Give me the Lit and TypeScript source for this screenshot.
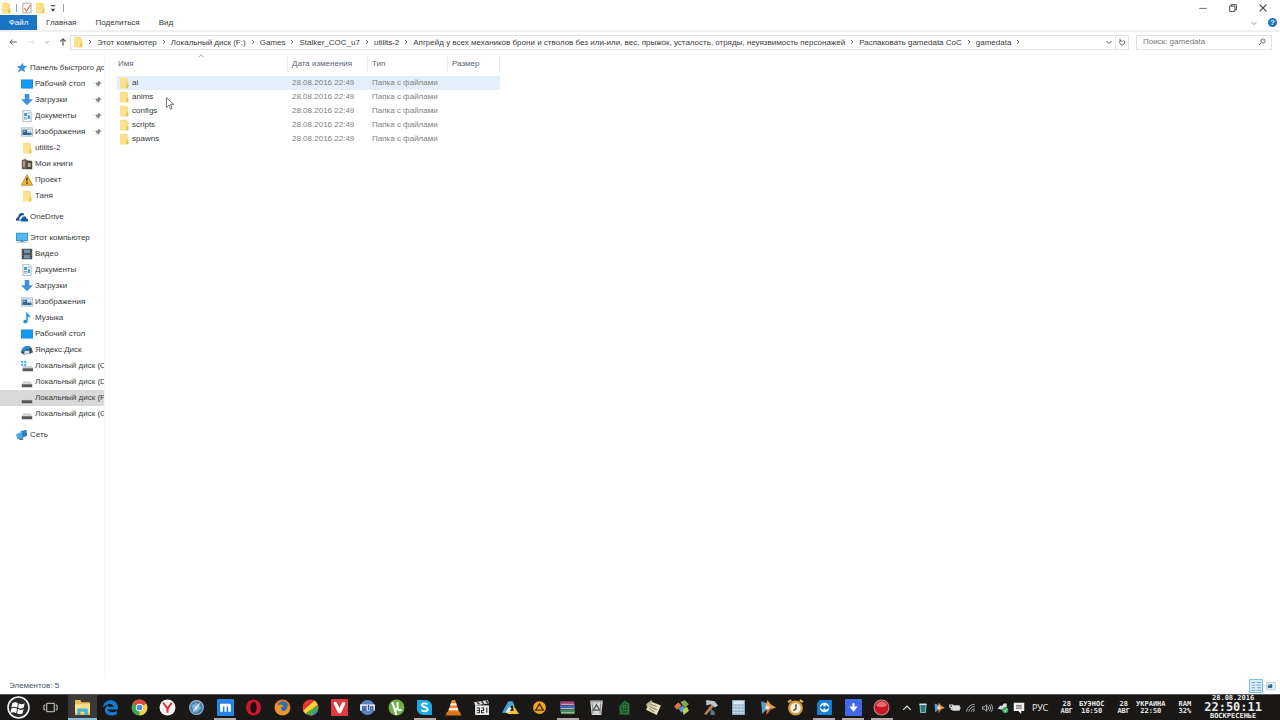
import { LitElement, html, svg, css, nothing, TemplateResult } from "lit";
import { customElement, property } from "lit/decorators.js";
import { classMap } from "lit/directives/class-map.js";

type Art = TemplateResult<2>;

const art: Record<string, Art> = {
  folder: svg`<path d="M3 1h7l1 1h2v13H3z" fill="#f5d675"/><path d="M3 2h8v13H3z" fill="#fce28c"/><path d="M12 9h2v6h-4z" fill="#eac653"/>`,
  check: svg`<path d="M2.500 1.500h11v13h-11z" fill="#f7f7f7" stroke="#9a9a9a"/><path d="M4.500 8l3 4 5-8" fill="none" stroke="#d0734e" stroke-width="1.600"/>`,
  star: svg`<path d="M9 1l1 4 5 0-4 4 1 5-4-3-6 3 3-5-4-3 5-1z" fill="#3a93dc"/>`,
  desktop: svg`<path d="M0 2h16v12H0z" fill="#1482d8"/><path d="M1 3h14v10H1z" fill="#169bf5"/>`,
  down: svg`<path d="M5 0h6v7h5l-8 8-8-8h5z" fill="#3f8fdb"/>`,
  docs: svg`<path d="M2.500.5h9l2 2v13h-11z" fill="#f3f9fc" stroke="#91a9b5"/><path d="M4 4h4v4H4zM9 7h3v5H9z" fill="#4aa0cc"/><path d="M4 10h4M9 4h3M4 12h4" stroke="#6a8b9c"/>`,
  pics: svg`<path d="M.5 2.500h15v11H.5z" fill="#edf5fa" stroke="#8fa3ae"/><path d="M2 4h12v8H2z" fill="#b9dcf3"/><path d="M2 5h6v7H2zM2 9h12v3H2z" fill="#35658d"/><path d="M8 6h5M3 7h3" stroke="#fff"/>`,
  books: svg`<path d="M1 3l5-2 2 3v11H1z" fill="#6c6253"/><path d="M7 3l8 1v11H7z" fill="#4b4740"/><path d="M3 4h2v8H3z" fill="#c9b38b"/><path d="M9 6l4 1v5H9z" fill="#b8a88c"/>`,
  warn: svg`<path d="M8 1l7.500 14H.5z" fill="#f6b734" stroke="#b07616"/><path d="M7 5h2l-.4 5H7.400zM7 11h2v2H7z" fill="#222"/>`,
  onedrive: svg`<path d="M0 12c0-3 2-4 3-4 0-4 4-7 8-4l-1 2C8 5 6 6 6 8c-2 0-2 3-1 5H2c-1 0-2 0-2-1z" fill="#1b4f96"/><path d="M7 14c-2-1-1-4 1-4 0-4 6-4 6 0 3 0 3 4 1 4z" fill="#1c5ba5"/>`,
  pc: svg`<path d="M0 1h16v11H0z" fill="#3588c4"/><path d="M1 2h14v9H1z" fill="#50baf3"/><path d="M6 12h4v1h5v1H1v-1h5z" fill="#7996a8"/>`,
  video: svg`<path d="M1 1h14v14H1z" fill="#3c4247"/><path d="M4 2h8v5H4zM4 9h8v5H4z" fill="#6e92ad"/><path d="M2.500 2v13M13.500 2v13" stroke="#b8bdc0" stroke-dasharray="1 1.500"/>`,
  music: svg`<path d="M8 0c1 4 6 4 4 9 0-3-3-3-3-3v6c0 4-6 4-6 1s3-3 4-2V0z" fill="#2493de"/>`,
  yadisk: svg`<path d="M0 12C1 4 9 0 14 5l2 6-4 2-8 1z" fill="#3b5870"/><path d="M0 10c2-8 10-9 13-5L6 8z" fill="#2c8ed0"/><path d="M5 9h6v4H4z" fill="#dce9f0"/>`,
  sysdrive: svg`<path d="M0 1h3v3H0zM4 1h3v3H4zM0 5h3v3H0zM4 5h3v3H4z" fill="#59bfe9"/><path d="M3 8h11l2 3H2z" fill="#cdd0d2"/><path d="M2 11h14v4H2z" fill="#5a5d60"/>`,
  drive: svg`<path d="M3 7h10l2 4H1z" fill="#d5d5d5"/><path d="M1 11h14v4H1z" fill="#55585a"/>`,
  net: svg`<path d="M6 3l8-2 1 8-7 3z" fill="#2f83bd"/><path d="M0 7l8-3 1 8-7 2z" fill="#53a7db"/><path d="M4 13l5-1 1 2-5 1z" fill="#37698c"/>`,
  start: svg`<circle cx="8" cy="8" r="7.300" fill="#2a2a2a" stroke="#f4f4f4" stroke-width="1.100"/><path d="M3.600 5c1.600-.9 2.800-.8 4 0l-.5 3c-1.500-.8-2.700-.7-4 0zM8.300 5.200c1.500.7 2.700.6 4-.2l-.7 3c-1.300.9-2.500.9-3.900.1zM3 8.800c1.300-.8 2.500-.7 4 .1L6.400 12c-1.400-.9-2.600-.9-4-.1zM7.600 9.100c1.400.8 2.600.7 3.900-.1l-.6 3c-1.400.9-2.600.8-3.900 0z" fill="#fff"/>`,
  taskview: svg`<path d="M4 3.500h8v9H4zM2.500 5.500h-1.500v5h1.500M13.500 5.500h1.500v5h-1.500" fill="none" stroke="#dcdcdc"/>`,
  explorer: svg`<path d="M1 1h5l1 2h8v12H1z" fill="#e8c35c"/><path d="M1 5h14v8H1z" fill="#fbe28e"/><path d="M3 9h10v6h-3v-3H6v3H3z" fill="#4db1cf"/>`,
  edge: svg`<path d="M1 8c.3-9 14-9 14 0v1.800H5.500c.3 3 5 3.300 8.500 1.500v3C7 17.500 1.500 14 3 9c.4-1.600 1.600-2.800 3-3.400-.6.7-.7 1.300-.7 1.700h5.500C10.600 3.500 4.500 3.800 1 8z" fill="#1977cc"/>`,
  chrome: svg`<circle cx="8" cy="8" r="7.500" fill="#44a552"/><path d="M8 8L1.500 4.200A7.500 7.500 0 0 1 14.500 4.400z" fill="#e14a38"/><path d="M8 8l6.500-3.600A7.500 7.500 0 0 1 8 15.500z" fill="#f7d13f"/><circle cx="8" cy="8" r="3.500" fill="#fff"/><circle cx="8" cy="8" r="2.700" fill="#4b8fd5"/>`,
  yandex: svg`<circle cx="8" cy="8" r="7.500" fill="#f6f6f6"/><path d="M4 3.500l4 5.500v4M12 3.500L8 9" fill="none" stroke="#d83434" stroke-width="1.900"/>`,
  safari: svg`<circle cx="8" cy="8" r="7" fill="#a9bac7"/><circle cx="8" cy="8" r="6" fill="#3c7cae"/><path d="M3 6l5-3 2 3 3 2-5 5-3-2z" fill="#6fb1d6"/><path d="M12 3L8.800 9 4 13l3-6z" fill="#e6e4e0"/>`,
  maxthon: svg`<rect width="16" height="16" rx="1" fill="#2584e4"/><path d="M3 12V4.500h8.500c1 0 1.500.5 1.500 1.500v6h-2.500V7H9v5H7V7H5.500v5z" fill="#fff"/>`,
  opera: svg`<ellipse cx="8" cy="8" rx="7" ry="7.500" fill="#d3142d"/><ellipse cx="8" cy="8" rx="3" ry="5.500" fill="#1b1011"/>`,
  firefox: svg`<circle cx="8" cy="8" r="7.500" fill="#e8742a"/><circle cx="8.500" cy="7" r="5" fill="#2d6fab"/><path d="M1 4l3 2c3-2 4 0 5 1-3 0-3 3-1 4 3 1 5-2 5-6 3 5 1 10-5 10C3 15 0 11 1 4z" fill="#f0942e"/>`,
  rainbow: svg`<circle cx="8" cy="8" r="7.500" fill="#e6382e"/><path d="M1 11L12 1.500l3 4L3.500 14z" fill="#f4d83c"/><path d="M3 13.500L15.500 6c.4 5-3 9.500-7.500 9.500z" fill="#49a945"/><path d="M8 15.500l7.500-6c-1 4-4 6-7.500 6z" fill="#368bd2"/>`,
  vivaldi: svg`<rect width="16" height="16" rx="1" fill="#e2393e"/><path d="M2.500 4.500C2 2 5 2 5.800 4L8 8.500 9.800 5c.7-3 4.200-2.500 3.500 0L9.500 13c-.7 1-2.300 1-3 0z" fill="#fff"/>`,
  globe: svg`<circle cx="8" cy="8" r="7" fill="#5a83c0"/><path d="M1 5h14v6H1z" fill="#d9e5f3"/><path d="M3.500 6.500v4h3v-4M5 6.500v4M9 5.500v5M11 7.500h2v3h-2z" fill="none" stroke="#315998" stroke-width="1.200"/>`,
  utorrent: svg`<circle cx="8" cy="8" r="7.500" fill="#6dae45"/><path d="M4 3l2 6c1 2 3 1 3-1V3M9 7c0 4 2 4 4 3M6 9l2 6" fill="none" stroke="#fff" stroke-width="1.900"/>`,
  skype: svg`<path d="M1 1h9c4 1 6 5 5 7v7H7C3 15 0 11 1 7z" fill="#1aa9e8"/><path d="M11 5C9 3.500 5 4 5.500 6c.5 2 5.500 1 5.500 3.700 0 2.300-4 2.300-6 .8" fill="none" stroke="#fff" stroke-width="1.800"/>`,
  vlc: svg`<path d="M6.500 1h3l4 12h-11z" fill="#f08a24"/><path d="M5.500 4h5l.7 2H4.800zM4 8.500h8l.6 2H3.400z" fill="#eee"/><path d="M2 12h12l1.500 3.500H.5z" fill="#dd7417"/>`,
  clapper: svg`<path d="M1 3l13-2 1 3L2 6z" fill="#ddd"/><path d="M4 3l2 2M8 2l2 2.500M12 1.500l2 2" stroke="#222" stroke-width="1.300"/><path d="M2 6h13v9H2z" fill="#efefef"/><path d="M3.500 8.500H6V13H3.500M8 8.500h2v2.300H8V13h2.500M13 8v5M3.500 10.800H6" fill="none" stroke="#292929"/>`,
  aimp: svg`<path d="M0 13L6 2h4l2 5-3-1-5 7z" fill="#42a6dc"/><path d="M10 5l6 9H5l1-3h5z" fill="#f1c62b"/><path d="M7 7l-4 6h3l3-4z" fill="#e7f3f9"/>`,
  orange: svg`<circle cx="8" cy="8" r="6" fill="#f4a41e"/><path d="M8 4.500l3.500 6h-7z" fill="none" stroke="#443018" stroke-width="1.300"/>`,
  rar: svg`<path d="M1 2h13l1 4H1z" fill="#9b4172"/><path d="M1 6h14v4H1z" fill="#4863b1"/><path d="M1 10h14v4H2z" fill="#428b55"/><path d="M2 5h12M2 9h12M2 13h12" stroke="#d8cdbb" stroke-width=".8"/>`,
  recycle: svg`<path d="M2 1.500h12L12.500 15h-9z" fill="#d4d6d6"/><path d="M2 2.500h12M4 4l.7 10M12 4l-.7 10" stroke="#8c9090"/><path d="M8 5.500l3 5H5z" fill="none" stroke="#525757" stroke-width="1.200"/>`,
  greendoc: svg`<path d="M3 6l5-5 5 3v11H3z" fill="#1e4b2d"/><path d="M4.500 7L8 3l3.500 2v8.500h-7zM5 11h6M7 9V6h2v3" fill="none" stroke="#318747" stroke-width=".9"/>`,
  note: svg`<path d="M5 2l10 4-4 9L1 10z" fill="#e6dfbd"/><path d="M5 5l6 2M4 7l7 3M4 9l5 3" stroke="#746d55" stroke-width=".9"/><path d="M1 5l5-4 1 2-5 5z" fill="#b8b394"/>`,
  winflag: svg`<path d="M1 7l4-4 3 3-4 4z" fill="#df744a"/><path d="M7 3l4-2 4 4-4 3z" fill="#7fa94b"/><path d="M5 9l4-3 3 3-4 4z" fill="#5694ce"/><path d="M9 10l4-3 2 4-5 4z" fill="#b9d849"/>`,
  knife: svg`<path d="M4 1l8 1 3 4-3 2-4-3-4 1z" fill="#bdc7ca"/><path d="M9 5l2 2-7 8-2-1z" fill="#b78450"/><path d="M8 9l4 3v3H8z" fill="#587882"/>`,
  calc: svg`<rect x="2" y="1" width="12" height="14" fill="#9ab7cc"/><path d="M3 2h10v3H3z" fill="#dce9f0"/><path d="M3 7h10M3 10h10M3 13h10" stroke="#d9e6ed" stroke-width="1.500" stroke-dasharray="2 1"/>`,
  fan: svg`<path d="M2 2l8 3-2 4-5 5z" fill="#5b9fd0"/><path d="M8 1l3 4 5 3-6 2-4-3z" fill="#ee9b43"/><path d="M7 8l5 1-5 6z" fill="#d6652e"/><circle cx="8" cy="8" r="2" fill="#f1eadc"/>`,
  alarm: svg`<circle cx="8" cy="8.500" r="6" fill="#f3eede" stroke="#d79a31" stroke-width="2"/><path d="M8.500 5v4L6 11" fill="none" stroke="#4c4639" stroke-width="1.300"/><path d="M1 3l3-2M12 1l3 2" stroke="#e3b75c" stroke-width="2"/>`,
  teamviewer: svg`<path d="M3 1h12v14H1V4z" fill="#1681da"/><circle cx="8" cy="8" r="4.500" fill="#eff7fc"/><path d="M3.500 8L7 5.500V7h2V5.500L12.500 8 9 10.500V9H7v1.500z" fill="#1472c4"/>`,
  bluedown: svg`<rect width="16" height="16" rx="1" fill="#4269e8"/><path d="M7 4h2v3h3l-4 5-4-5h3z" fill="#fff"/>`,
  record: svg`<circle cx="8" cy="8" r="7" fill="#c91423" stroke="#bd9090"/><path d="M3 6c1-5 9-5 10 0-3 2-7 2-10 0z" fill="#ea6b73"/>`,
  chevup: svg`<path d="M3 10.500l5-5 5 5" fill="none" stroke="currentColor" stroke-width="1.600"/>`,
  trash: svg`<path d="M4 3h8l-.7 11H4.700z" fill="#287c7a" stroke="#b7dfdc"/><path d="M3 3h10" stroke="#eee" stroke-width="1.500"/>`,
  battery: svg`<path d="M5 5h9v6H5zM15 7v2" fill="#ddd" stroke="#ddd"/><path d="M1 4h4v3H1zM3 7v3h3" fill="none" stroke="#eee" stroke-width="1.400"/>`,
  wifi: svg`<path d="M2 13A11 11 0 0 1 13 3M5 13a8 8 0 0 1 8-7M8 13a5 5 0 0 1 5-4M11 13a2 2 0 0 1 2-2" fill="none" stroke="#d0d0d0"/>`,
  sound: svg`<path d="M2 6.500h2.500l3-3v9l-3-3H2zM9 5.500c1.500 1.500 1.500 3.500 0 5M11 4c2.300 2.300 2.300 5.700 0 8M13 2.500c3 3 3 8 0 11" fill="none" stroke="#ddd"/>`,
  usb: svg`<path d="M1 9l3-4h3l2-3h4v4l-3 4H5z" fill="#dcdcdc"/><circle cx="11" cy="11" r="4" fill="#2fa55a"/><path d="M9 11l2 2 2-4" fill="none" stroke="#fff"/>`,
  message: svg`<path d="M1 1h14v11h-4v4l-4-4H1z" fill="#f3f3f3"/><path d="M4 4.500h8M4 6.500h8M4 8.500h8" stroke="#444" stroke-width=".9"/>`,
  back: svg`<path d="M14 8H3M7 4L3 8l4 4" fill="none" stroke="currentColor" stroke-width="1.500"/>`,
  forward: svg`<path d="M2 8h11M9 4l4 4-4 4" fill="none" stroke="currentColor" stroke-width="1.500"/>`,
  up: svg`<path d="M8 14V3M3.500 7.500L8 3l4.500 4.500" fill="none" stroke="currentColor" stroke-width="1.800"/>`,
  chevdown: svg`<path d="M3 6l5 5 5-5" fill="none" stroke="currentColor" stroke-width="2"/>`,
  chevright: svg`<path d="M6 4l4 4-4 4" fill="none" stroke="currentColor" stroke-width="1.800"/>`,
  menu: svg`<path d="M5 5h6" stroke="currentColor" stroke-width="1.500"/><path d="M5 9h6l-3 4z" fill="currentColor"/>`,
  refresh: svg`<path d="M11 4.500A5 5 0 1 1 5 5M4 1v5h5" fill="none" stroke="currentColor" stroke-width="1.700"/>`,
  search: svg`<circle cx="10" cy="6" r="4.200" fill="none" stroke="currentColor" stroke-width="1.600"/><path d="M7 9l-5 5" stroke="currentColor" stroke-width="2"/>`,
  minimize: svg`<path d="M3 8.500h10" stroke="currentColor"/>`,
  restore: svg`<path d="M3.500 5.500h7v7h-7zM5.500 5.500v-2h7v7h-2" fill="none" stroke="currentColor" stroke-width="1.200"/>`,
  close: svg`<path d="M3.500 3.500l9 9M12.500 3.500l-9 9" stroke="currentColor" stroke-width="1.400"/>`,
  pin: svg`<path d="M9 1l6 6-2 .5-2.500 3L10 14 6.500 10.500 2 15l3.500-5.500L2 6l4-.5L9 3z" fill="#85898d"/>`,
  cursor: svg`<path d="M3 1v12l3-3 2 5 2-1-2-5h4z" fill="#fff" stroke="#555"/>`,
  details: svg`<path d="M.5.5h15v15H.5z" fill="#d4effb" stroke="#5cb9df"/><path d="M3 4h4M3 7h4M3 10h4M3 13h4M9 4h5M9 7h5M9 10h5M9 13h5" stroke="#6f9fb8"/>`,
  tiles: svg`<path d="M.5 2.500h15v11H.5z" fill="#e8f2f8" stroke="#9bb6c6"/><path d="M3 5h7v6H3z" fill="#35658d"/><path d="M3 5h5l-4 3z" fill="#b9dcf3"/>`,
};

@customElement("ui-icon")
export class UiIcon extends LitElement {
  @property() name = "folder";
  static styles = css`
    :host { display: block; flex: none; width: 12px; height: 12px; }
    svg { display: block; width: 100%; height: 100%; }
  `;
  render() {
    return html`<svg viewBox="0 0 16 16" aria-hidden="true">${art[this.name]}</svg>`;
  }
}

interface Place { icon: string; label: string; root?: boolean; pinned?: boolean; current?: boolean; }

const groups: Place[][] = [
  [
    { icon: "star", label: "Панель быстрого доступа", root: true },
    { icon: "desktop", label: "Рабочий стол", pinned: true },
    { icon: "down", label: "Загрузки", pinned: true },
    { icon: "docs", label: "Документы", pinned: true },
    { icon: "pics", label: "Изображения", pinned: true },
    { icon: "folder", label: "utilits-2" },
    { icon: "books", label: "Мои книги" },
    { icon: "warn", label: "Проект" },
    { icon: "folder", label: "Таня" },
  ],
  [{ icon: "onedrive", label: "OneDrive", root: true }],
  [
    { icon: "pc", label: "Этот компьютер", root: true },
    { icon: "video", label: "Видео" },
    { icon: "docs", label: "Документы" },
    { icon: "down", label: "Загрузки" },
    { icon: "pics", label: "Изображения" },
    { icon: "music", label: "Музыка" },
    { icon: "desktop", label: "Рабочий стол" },
    { icon: "yadisk", label: "Яндекс.Диск" },
    { icon: "sysdrive", label: "Локальный диск (C:)" },
    { icon: "drive", label: "Локальный диск (D:)" },
    { icon: "drive", label: "Локальный диск (F:)", current: true },
    { icon: "drive", label: "Локальный диск (G:)" },
  ],
  [{ icon: "net", label: "Сеть", root: true }],
];

const crumbs = [
  "Этот компьютер", "Локальный диск (F:)", "Games", "Stalker_COC_u7", "utilits-2",
  "Апгрейд у всех механиков брони и стволов без или-или, вес, прыжок, усталость, отряды, неуязвимость персонажей",
  "Распаковать gamedata CoC", "gamedata",
];

const files = ["ai", "anims", "configs", "scripts", "spawns"];

const apps = [
  "explorer", "edge", "chrome", "yandex", "safari", "maxthon", "opera", "firefox", "rainbow", "vivaldi",
  "globe", "utorrent", "skype", "vlc", "clapper", "aimp", "orange", "rar", "recycle", "greendoc",
  "note", "winflag", "knife", "calc", "fan", "alarm", "teamviewer", "bluedown", "record",
];
const running = new Set(["maxthon", "skype", "rar", "teamviewer", "bluedown", "record"]);
const tray = ["chevup", "trash", "fan", "battery", "wifi", "sound", "usb", "message"];

@customElement("app-root")
export class AppRoot extends LitElement {
  static styles = css`
    :host {
      display: flex; flex-direction: column; height: 100vh; overflow: hidden; position: relative;
      background: #fff; color: #3a3a3a;
      font: 8px/16px "Liberation Sans", Arial, sans-serif;
    }
    * { box-sizing: border-box; }
    button, input { font: inherit; color: inherit; border: 0; padding: 0; margin: 0; background: none; }
    a { color: inherit; text-decoration: none; }
    .title { display: flex; align-items: center; height: 15px; flex: none; }
    .quick { display: flex; align-items: center; gap: 1px; flex: 1; }
    .quick .bar { width: 1px; height: 8px; background: #8fa3ba; margin: 0 3px; }
    .caption { display: flex; gap: 18px; padding-right: 11px; }
    .tabs { display: flex; align-items: center; height: 17px; flex: none; border-bottom: 2px solid #f0f0f0; }
    .tabs button { height: 15px; }
    .tabs .file { width: 37px; background: #1a74c4; color: #fff; margin-right: 9px; }
    .tabs .tab { margin-right: 19px; }
    .tabs .end { display: flex; align-items: center; gap: 10px; margin-left: auto; padding-right: 3px; color: #999; }
    .tabs .end ui-icon { width: 8px; height: 8px; }
    .tabs .help { width: 9px; height: 9px; border-radius: 50%; background: #1a74c4; color: #fff; font-weight: bold; line-height: 9px; }
    .nav { display: flex; align-items: center; height: 20px; flex: none; padding: 0 8px; color: #555; }
    .nav .arrows { display: flex; align-items: center; gap: 8px; width: 62px; }
    .arrows ui-icon { width: 10px; height: 10px; }
    .arrows .dim { color: #ddd; }
    .arrows .small { width: 6px; height: 6px; color: #888; }
    .address { display: flex; align-items: center; flex: 1; min-width: 0; height: 15px; border: 1px solid #e2e2e2; color: #3a3a3a; }
    .crumbs { display: flex; align-items: center; list-style: none; margin: 0; padding: 0; flex: 1; min-width: 0; overflow: hidden; white-space: nowrap; line-height: 13px; }
    .crumbs li { display: flex; align-items: center; }
    .crumbs ui-icon { width: 8px; height: 8px; margin: 0 3px; color: #666; }
    .crumbs li:first-child ui-icon { margin-left: 1px; }
    .address > ui-icon { margin: 0 1px; }
    .address button { width: 13px; height: 13px; display: grid; place-items: center; color: #555; }
    .address button ui-icon { width: 8px; height: 8px; }
    .address .refresh { border-left: 1px solid #e2e2e2; }
    .search { display: flex; align-items: center; width: 136px; height: 15px; margin-left: 7px; padding: 0 5px; border: 1px solid #e2e2e2; }
    .search input { flex: 1; min-width: 0; height: 13px; padding-left: 1px; outline: 0; }
    .search input::placeholder { color: #777; opacity: 1; }
    .search ui-icon { width: 8px; height: 8px; }
    .body { display: flex; flex: 1; min-height: 0; }
    .side { width: 105px; flex: none; padding-top: 8px; border-right: 1px solid #f6f6f6; overflow: hidden; }
    .side ul { list-style: none; margin: 0 0 5px; padding: 0; }
    .place { display: flex; align-items: center; gap: 2px; height: 16px; padding-left: 21px; white-space: nowrap; }
    .place span { flex: 1; min-width: 0; overflow: hidden; }
    .place.root { padding-left: 16px; }
    .place.current { background: #d9d9d9; }
    .place .pin { width: 8px; height: 8px; margin-right: 2px; }
    .main { flex: 1; min-width: 0; padding: 3px 0 0 12px; }
    table { border-collapse: collapse; table-layout: fixed; width: 383px; line-height: 14px; }
    .c1 { width: 171px; } .c2, .c3 { width: 80px; }
    th { position: relative; padding: 0 0 4px; font-weight: normal; text-align: left; color: #5b6478; }
    th span { display: block; height: 17px; line-height: 17px; padding-left: 4px; border-right: 1px solid #ececec; }
    th:first-child span { padding-left: 1px; }
    th ui-icon { position: absolute; top: -3px; left: 80px; width: 8px; height: 8px; color: #888; }
    td { padding: 0 0 0 4px; height: 14px; color: #808080; }
    td .name { display: flex; align-items: center; gap: 2px; color: #3a3a3a; }
    td:first-child { padding-left: 1px; }
    tr.hover td { background: #e3f0fb; }
    .status { display: flex; align-items: center; height: 16px; flex: none; padding: 0 4px 0 9px; color: #4a5268; }
    .status .views { display: flex; align-items: center; gap: 3px; margin-left: auto; }
    .views ui-icon { width: 14px; height: 14px; }
    .views .small { width: 10px; height: 10px; }
    .taskbar { display: flex; align-items: stretch; height: 26px; flex: none; background: #191817; border-top: 1px solid #555; color: #e8e8e8; }
    .taskbar button { display: flex; align-items: center; justify-content: center; }
    .taskbar .start { width: 37px; }
    .start ui-icon { width: 23px; height: 23px; }
    .taskbar .view { width: 27px; }
    .view ui-icon { width: 15px; height: 15px; }
    .apps { display: flex; flex: 0 0 65%; padding-left: 4px; }
    .apps button { flex: 1; min-width: 0; }
    .apps ui-icon { width: 17px; height: 17px; }
    .apps .running { background: linear-gradient(#b5aaa7, #b5aaa7) bottom / 22px 2px no-repeat; }
    .apps .active { background: #3b3a38; box-shadow: inset 0 -2px #8fb9d8; }
    .tray { display: flex; align-items: center; gap: 4px; flex: 1; min-width: 0; padding: 0 18px 0 5px; white-space: nowrap; }
    .lang { font: 9px/16px "Noto Sans", sans-serif; margin-left: 3px; }
    .widgets { display: flex; align-items: center; gap: 13px; margin-left: auto; }
    .widget { display: flex; gap: 6px; font: bold 7px/7px "DejaVu Sans Mono", monospace; text-align: center; }
    .clock { font: bold 7px/7px "DejaVu Sans Mono", monospace; text-align: center; }
    .clock time, .clock span { display: block; }
    .clock .now { font-size: 12px; line-height: 11px; }
    .cursor { position: absolute; left: 164px; top: 97px; width: 13px; height: 13px; }
  `;

  private place(p: Place) {
    return html`<li><a href="#" class=${classMap({ place: true, root: !!p.root, current: !!p.current })}>
      <ui-icon name=${p.icon}></ui-icon><span>${p.label}</span>
      ${p.pinned ? html`<ui-icon class="pin" name="pin"></ui-icon>` : nothing}</a></li>`;
  }

  render() {
    return html`
      <header class="title">
        <div class="quick">
          <ui-icon name="folder"></ui-icon><span class="bar"></span>
          <ui-icon name="check"></ui-icon><ui-icon name="folder"></ui-icon>
          <ui-icon name="menu"></ui-icon><span class="bar"></span>
        </div>
        <div class="caption">
          <button aria-label="Свернуть"><ui-icon name="minimize"></ui-icon></button>
          <button aria-label="Развернуть"><ui-icon name="restore"></ui-icon></button>
          <button aria-label="Закрыть"><ui-icon name="close"></ui-icon></button>
        </div>
      </header>
      <div class="tabs">
        <button class="file">Файл</button>
        <button class="tab">Главная</button><button class="tab">Поделиться</button><button class="tab">Вид</button>
        <div class="end"><ui-icon name="chevdown"></ui-icon><button class="help">?</button></div>
      </div>
      <nav class="nav">
        <div class="arrows">
          <button aria-label="Назад"><ui-icon name="back"></ui-icon></button>
          <button aria-label="Вперед"><ui-icon class="dim" name="forward"></ui-icon></button>
          <button aria-label="Последние"><ui-icon class="small" name="chevdown"></ui-icon></button>
          <button aria-label="Вверх"><ui-icon name="up"></ui-icon></button>
        </div>
        <div class="address">
          <ui-icon name="folder"></ui-icon>
          <ol class="crumbs"><li><ui-icon name="chevright"></ui-icon></li>
            ${crumbs.map((c) => html`<li><a href="#">${c}</a><ui-icon name="chevright"></ui-icon></li>`)}
          </ol>
          <button aria-label="История"><ui-icon name="chevdown"></ui-icon></button>
          <button class="refresh" aria-label="Обновить"><ui-icon name="refresh"></ui-icon></button>
        </div>
        <label class="search"><input type="text" aria-label="Поиск" placeholder="Поиск: gamedata" /><ui-icon name="search"></ui-icon></label>
      </nav>
      <div class="body">
        <aside class="side">${groups.map((g) => html`<ul>${g.map((p) => this.place(p))}</ul>`)}</aside>
        <main class="main">
          <table>
            <colgroup><col class="c1" /><col class="c2" /><col class="c3" /><col /></colgroup>
            <thead><tr>
              <th><ui-icon name="chevup"></ui-icon><span>Имя</span></th>
              <th><span>Дата изменения</span></th><th><span>Тип</span></th><th><span>Размер</span></th>
            </tr></thead>
            <tbody>${files.map((f, i) => html`<tr class=${classMap({ hover: i === 0 })}>
              <td><a href="#" class="name"><ui-icon name="folder"></ui-icon>${f}</a></td>
              <td>28.08.2016 22:49</td><td>Папка с файлами</td><td></td></tr>`)}</tbody>
          </table>
        </main>
      </div>
      <footer class="status">Элементов: 5
        <div class="views">
          <button aria-label="Таблица"><ui-icon name="details"></ui-icon></button>
          <button aria-label="Крупные значки"><ui-icon class="small" name="tiles"></ui-icon></button>
        </div>
      </footer>
      <div class="taskbar">
        <button class="start" aria-label="Пуск"><ui-icon name="start"></ui-icon></button>
        <button class="view" aria-label="Представление задач"><ui-icon name="taskview"></ui-icon></button>
        <div class="apps">${apps.map((a) => html`<button aria-label=${a}
          class=${classMap({ running: running.has(a), active: a === "explorer" })}><ui-icon name=${a}></ui-icon></button>`)}</div>
        <div class="tray">
          ${tray.map((t) => html`<ui-icon name=${t}></ui-icon>`)}
          <span class="lang">РУС</span>
          <div class="widgets">
            <div class="widget"><span>28<br />АВГ</span><span>БУЭНОС<br />16:50</span></div>
            <div class="widget"><span>28<br />АВГ</span><span>УКРАИНА<br />22:50</span></div>
            <div class="widget"><span>RAM<br />32%</span></div>
            <div class="clock"><span>28.08.2016</span><time class="now">22:50:11</time><span>ВОСКРЕСЕНЬЕ</span></div>
          </div>
        </div>
      </div>
      <ui-icon class="cursor" name="cursor"></ui-icon>
    `;
  }
}
